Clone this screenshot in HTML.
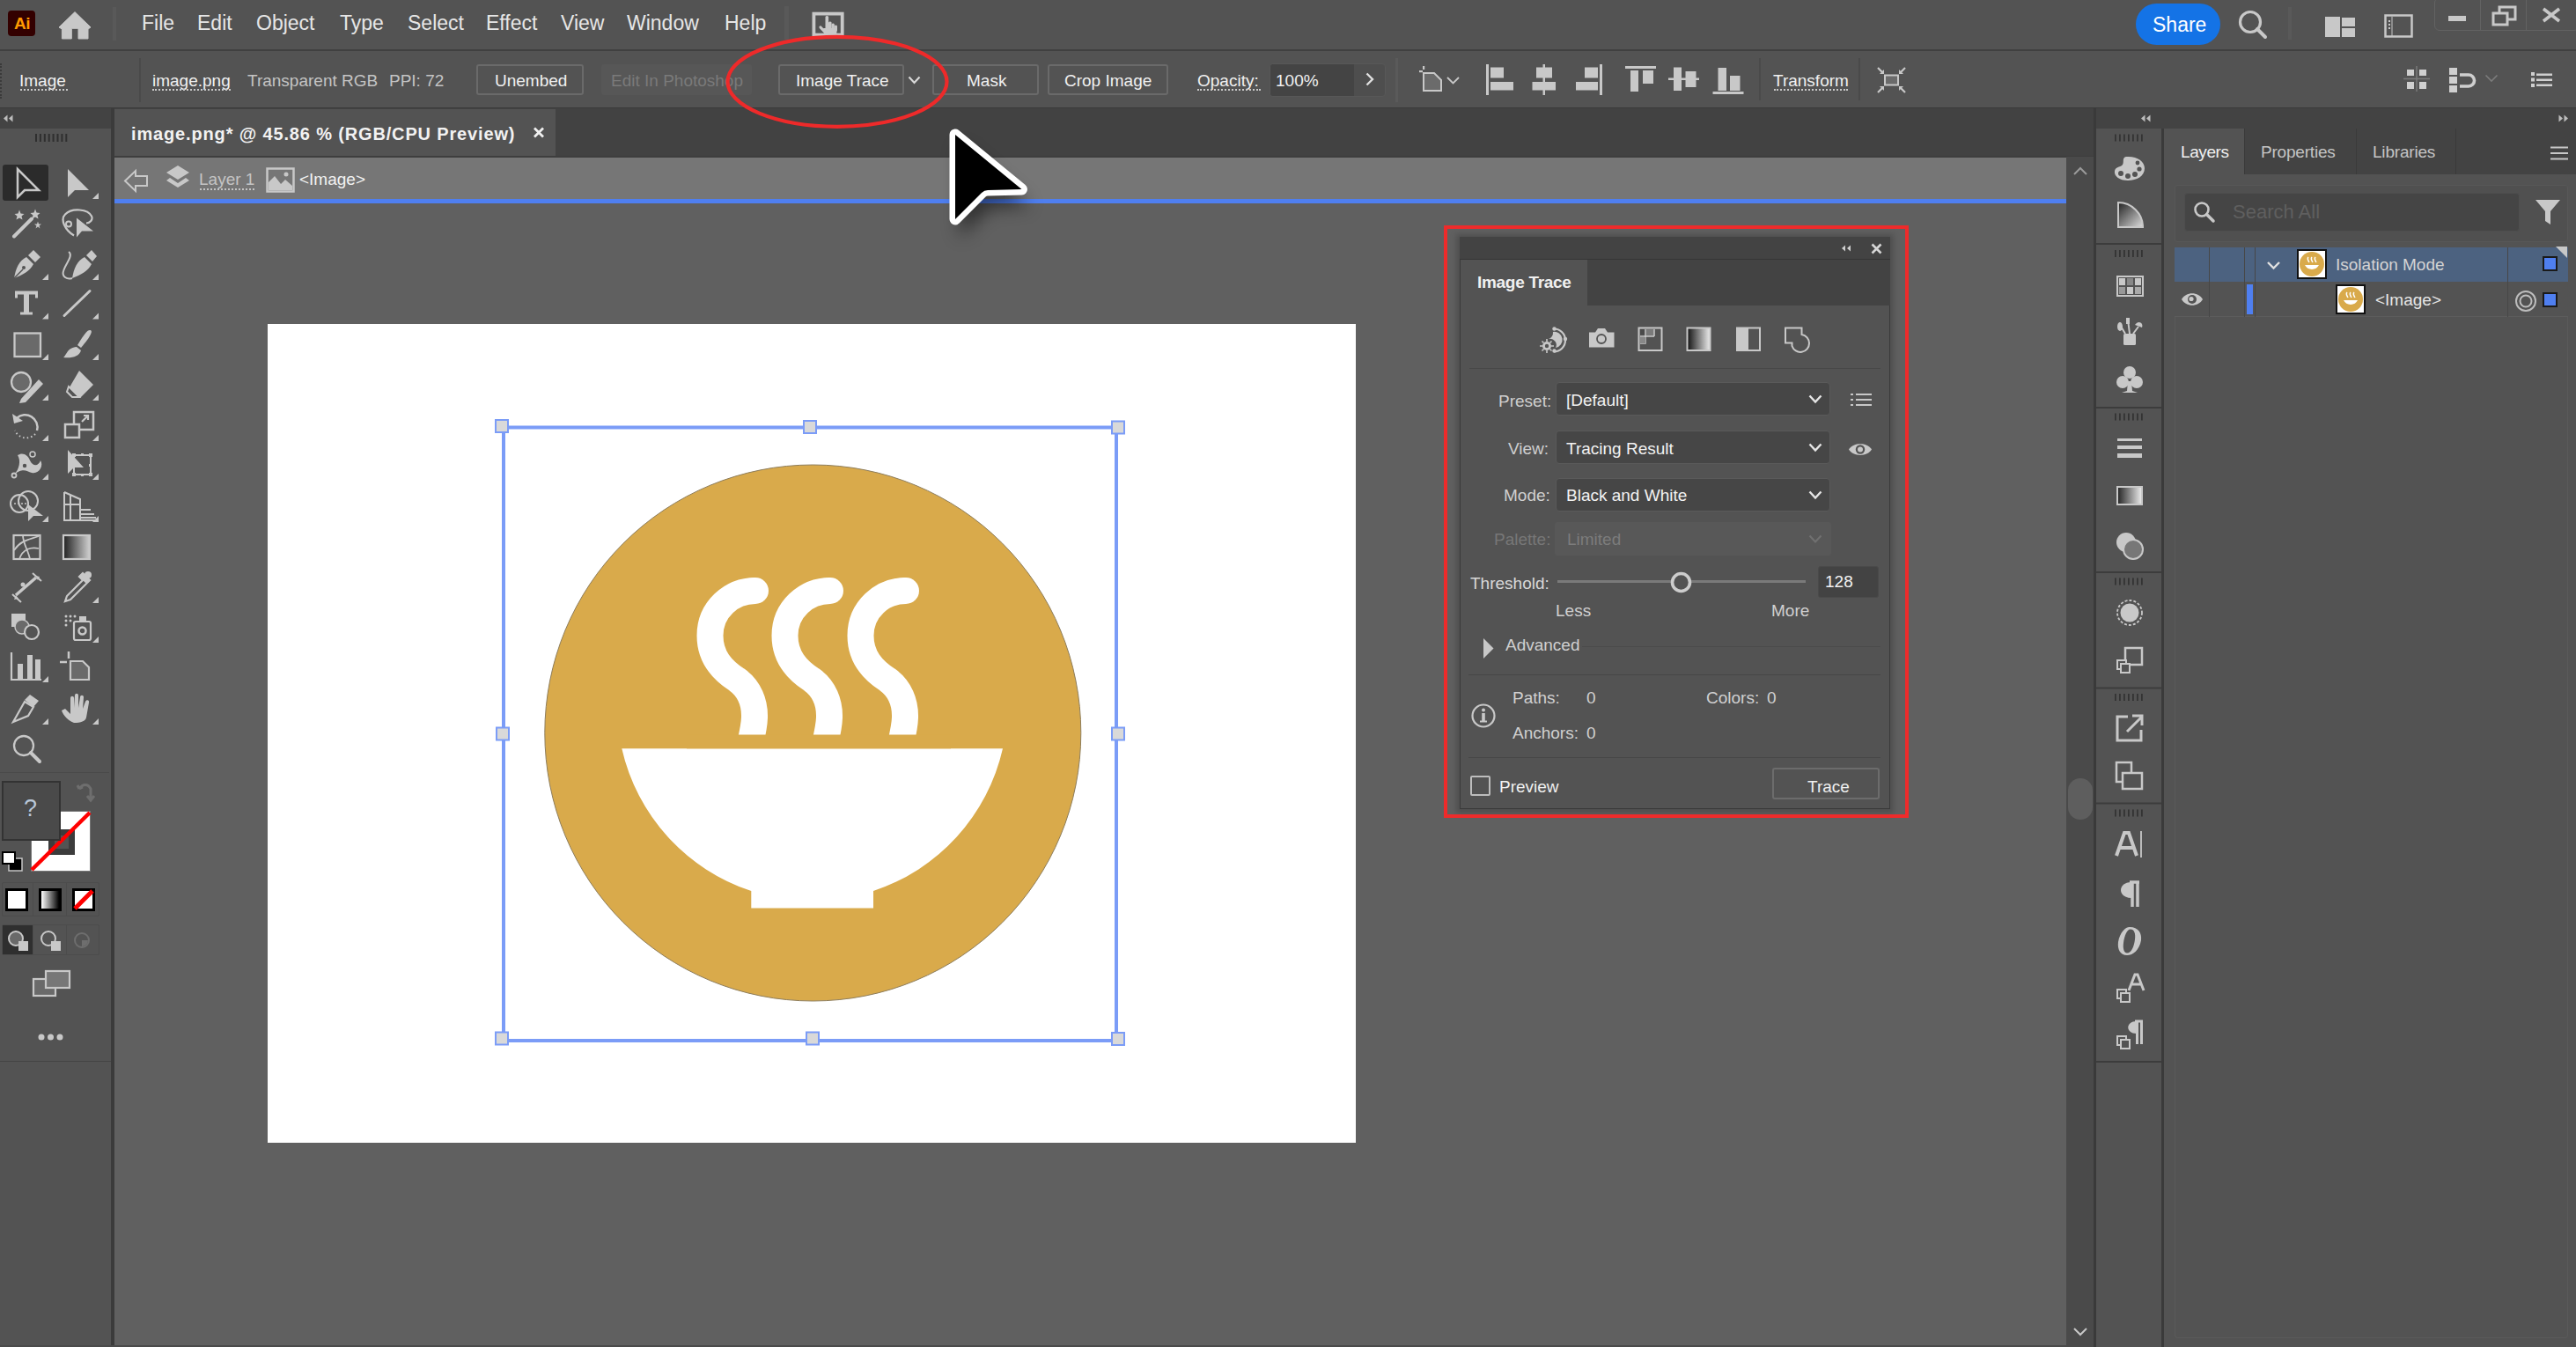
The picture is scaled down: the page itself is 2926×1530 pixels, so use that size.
<!DOCTYPE html>
<html><head><meta charset="utf-8">
<style>
*{margin:0;padding:0;box-sizing:border-box}
html,body{width:2926px;height:1530px;overflow:hidden;background:#535353;font-family:"Liberation Sans",sans-serif;color:#e0e0e0}
.a{position:absolute}
.t{position:absolute;white-space:nowrap;line-height:1}
svg{position:absolute;overflow:visible}
.dot{border-bottom:2px dotted #c8c8c8}
</style></head><body>

<!-- MENU BAR -->
<div class="a" style="left:0;top:0;width:2926px;height:56px;background:#535353"></div>
<div class="a" style="left:0;top:56px;width:2926px;height:2px;background:#404040"></div>
<!-- CONTROL BAR -->
<div class="a" style="left:0;top:58px;width:2926px;height:63px;background:#535353"></div>
<div class="a" style="left:0;top:122px;width:2926px;height:2px;background:#3a3a3a"></div>


<!-- MENU CONTENT -->
<div class="a" style="left:9px;top:12px;width:31px;height:29px;background:#330000;border-radius:4px"></div>
<div class="t" style="left:16px;top:17px;font-size:19px;font-weight:bold;color:#ff9a00;letter-spacing:-0.5px">Ai</div>
<svg style="left:66px;top:12px" width="40" height="34" viewBox="66 12 40 34"><path d="M85 13.6 L103 31 L100 33 L100 44 L89 44 L89 32.3 L81.3 32.3 L81.3 44 L70.4 44 L70.4 33 L67 31 Z" fill="#c8c8c8" stroke="#c8c8c8" stroke-width="1" stroke-linejoin="round"/></svg>
<div class="a" style="left:128px;top:8px;width:4px;height:38px;background:#595959"></div>
<div class="t" style="left:161px;top:15px;font-size:23px;color:#e6e6e6">File</div>
<div class="t" style="left:224px;top:15px;font-size:23px;color:#e6e6e6">Edit</div>
<div class="t" style="left:291px;top:15px;font-size:23px;color:#e6e6e6">Object</div>
<div class="t" style="left:386px;top:15px;font-size:23px;color:#e6e6e6">Type</div>
<div class="t" style="left:463px;top:15px;font-size:23px;color:#e6e6e6">Select</div>
<div class="t" style="left:552px;top:15px;font-size:23px;color:#e6e6e6">Effect</div>
<div class="t" style="left:637px;top:15px;font-size:23px;color:#e6e6e6">View</div>
<div class="t" style="left:712px;top:15px;font-size:23px;color:#e6e6e6">Window</div>
<div class="t" style="left:823px;top:15px;font-size:23px;color:#e6e6e6">Help</div>
<div class="a" style="left:891px;top:7px;width:5px;height:38px;background:#595959"></div>
<svg style="left:922px;top:13px" width="38" height="28" viewBox="922 13 38 28"><rect x="924.4" y="15.6" width="32.3" height="24" fill="none" stroke="#c8c8c8" stroke-width="3.8"/><g fill="#c8c8c8"><rect x="937.5" y="18" width="3.6" height="16" rx="1.5"/><rect x="941" y="24.5" width="3.6" height="10" rx="1.5"/><rect x="944.5" y="26.5" width="3.4" height="8" rx="1.5"/><rect x="947.8" y="28.5" width="3.2" height="7" rx="1.5"/><path d="M935 32 H951 L950 40 H937.5Z"/></g><path d="M932 31 L937.5 37" stroke="#c8c8c8" stroke-width="3.2" stroke-linecap="round"/></svg>

<div class="a" style="left:2426px;top:4px;width:96px;height:47px;background:#1473e6;border-radius:24px"></div>
<div class="t" style="left:2445px;top:17px;font-size:23px;color:#ffffff">Share</div>
<svg style="left:2541px;top:11px" width="36" height="34" viewBox="0 0 36 34"><circle cx="15" cy="14" r="11.5" fill="none" stroke="#c8c8c8" stroke-width="3.2"/><path d="M23 22 L32 31" stroke="#c8c8c8" stroke-width="4" stroke-linecap="round"/></svg>
<div class="a" style="left:2599px;top:8px;width:4px;height:37px;background:#595959"></div>
<svg style="left:2641px;top:19px" width="35" height="23" viewBox="0 0 35 23"><rect x="0" y="0" width="17" height="23" fill="#c8c8c8"/><rect x="19" y="1" width="15" height="10" fill="#c8c8c8"/><rect x="19" y="13" width="15" height="10" fill="#c8c8c8"/></svg>
<svg style="left:2708px;top:16px" width="33" height="27" viewBox="0 0 33 27"><rect x="1.5" y="1.5" width="30" height="24" fill="none" stroke="#c8c8c8" stroke-width="2.5"/><path d="M6 7 v2 M6 11 v2 M6 15 v2" stroke="#c8c8c8" stroke-width="2"/><path d="M9 3 v22" stroke="#c8c8c8" stroke-width="1"/></svg>
<div class="a" style="left:2765px;top:-3px;width:165px;height:38px;border:1px solid #626262;border-radius:6px"></div>
<div class="a" style="left:2817px;top:0;width:1px;height:34px;background:#626262"></div>
<div class="a" style="left:2869px;top:0;width:1px;height:34px;background:#626262"></div>
<div class="a" style="left:2781px;top:18px;width:20px;height:6px;background:#c8c8c8"></div>
<svg style="left:2830px;top:6px" width="30" height="24" viewBox="0 0 30 24"><rect x="9" y="2" width="18" height="14" fill="none" stroke="#c8c8c8" stroke-width="3"/><rect x="2" y="9" width="16" height="13" fill="#535353" stroke="#c8c8c8" stroke-width="3"/></svg>
<svg style="left:2887px;top:9px" width="22" height="16" viewBox="0 0 22 16"><path d="M2 1 L20 15 M20 1 L2 15" stroke="#c8c8c8" stroke-width="3.5"/></svg>

<!-- CONTROL BAR CONTENT -->
<div class="a" style="left:0px;top:72px;width:2px;height:40px;border-left:2px dotted #3a3a3a"></div>
<div class="t" style="left:22px;top:82px;font-size:19px;color:#f0f0f0">Image</div>
<div class="a" style="left:23px;top:101px;width:54px;height:2px;border-top:2px dotted #c8c8c8"></div>
<div class="a" style="left:158px;top:66px;width:2px;height:50px;background:#4a4a4a"></div>
<div class="t" style="left:173px;top:82px;font-size:19px;color:#f0f0f0">image.png</div>
<div class="a" style="left:173px;top:101px;width:89px;height:2px;border-top:2px dotted #c8c8c8"></div>
<div class="t" style="left:281px;top:82px;font-size:19px;color:#c4c4c4">Transparent RGB</div>
<div class="t" style="left:442px;top:82px;font-size:19px;color:#c4c4c4">PPI: 72</div>
<div class="a" style="left:541px;top:73px;width:122px;height:35px;border:2px solid #6a6a6a;border-radius:3px"></div>
<div class="t" style="left:562px;top:82px;font-size:19px;color:#f0f0f0">Unembed</div>
<div class="a" style="left:683px;top:73px;width:171px;height:35px;background:#575757;border-radius:3px"></div>
<div class="t" style="left:694px;top:82px;font-size:19px;color:#7a7a7a">Edit In Photoshop</div>
<div class="a" style="left:884px;top:73px;width:143px;height:35px;border:2px solid #6a6a6a;border-radius:3px"></div>
<div class="t" style="left:904px;top:82px;font-size:19px;color:#f0f0f0">Image Trace</div>
<svg style="left:1031px;top:86px" width="15" height="10" viewBox="0 0 15 10"><path d="M1.5 1.5 L7.5 8 L13.5 1.5" fill="none" stroke="#d8d8d8" stroke-width="2.2"/></svg>
<div class="a" style="left:1059px;top:73px;width:121px;height:35px;border:2px solid #6a6a6a;border-radius:3px"></div>
<div class="t" style="left:1098px;top:82px;font-size:19px;color:#f0f0f0">Mask</div>
<div class="a" style="left:1190px;top:73px;width:137px;height:35px;border:2px solid #6a6a6a;border-radius:3px"></div>
<div class="t" style="left:1209px;top:82px;font-size:19px;color:#f0f0f0">Crop Image</div>
<div class="t" style="left:1360px;top:82px;font-size:19px;color:#f0f0f0">Opacity:</div>
<div class="a" style="left:1360px;top:101px;width:72px;height:2px;border-top:2px dotted #c8c8c8"></div>
<div class="a" style="left:1442px;top:72px;width:132px;height:38px;background:#4e4e4e;border:1px solid #585858;border-radius:4px"></div>
<div class="a" style="left:1443px;top:73px;width:95px;height:36px;background:#444444;border-radius:3px 0 0 3px"></div>
<div class="t" style="left:1449px;top:82px;font-size:19px;color:#f0f0f0">100%</div>
<svg style="left:1551px;top:82px" width="10" height="16" viewBox="0 0 10 16"><path d="M1.5 1.5 L8 8 L1.5 14.5" fill="none" stroke="#e0e0e0" stroke-width="2.4"/></svg>
<div class="a" style="left:1585px;top:66px;width:3px;height:50px;background:#5a5a5a"></div>

<svg style="left:1600px;top:70px" width="400" height="42" viewBox="1600 70 400 42">
 <g fill="#c8c8c8">
  <path d="M1617 83 h12 l8 8 v12 h-20z" fill="#6b6b6b" stroke="#c8c8c8" stroke-width="2"/>
  <rect x="1612" y="80" width="4" height="2.2"/><rect x="1616" y="75" width="2.2" height="4"/>
  <rect x="1688" y="73" width="3" height="35"/><rect x="1693" y="76.5" width="15" height="12"/><rect x="1693" y="93" width="26" height="9.5"/>
  <rect x="1752.5" y="73" width="2.5" height="35"/><rect x="1745" y="76.5" width="18" height="12"/><rect x="1740.5" y="93" width="26.5" height="9.5"/>
  <rect x="1817" y="73" width="3" height="35"/><rect x="1800" y="76.5" width="15" height="12"/><rect x="1790" y="93" width="25" height="9.5"/>
  <rect x="1846" y="75" width="35" height="3"/><rect x="1852" y="80" width="9" height="24"/><rect x="1866" y="80" width="12" height="15"/>
  <rect x="1895" y="88.5" width="35" height="2.5"/><rect x="1901" y="76.5" width="9" height="26.5"/><rect x="1914.5" y="81" width="12" height="18"/>
  <rect x="1945.5" y="104" width="35" height="3"/><rect x="1951.5" y="77" width="9.5" height="26"/><rect x="1965" y="86" width="11.5" height="17"/>
 </g>
 <path d="M1644 88 l6.5 6.5 l6.5 -6.5" fill="none" stroke="#c8c8c8" stroke-width="1.8"/>
</svg>
<div class="a" style="left:1998px;top:66px;width:2px;height:48px;background:#4a4a4a"></div>
<div class="t" style="left:2014px;top:82px;font-size:19px;color:#f0f0f0">Transform</div>
<div class="a" style="left:2015px;top:101px;width:84px;height:2px;border-top:2px dotted #c8c8c8"></div>
<div class="a" style="left:2111px;top:66px;width:2px;height:48px;background:#4a4a4a"></div>
<svg style="left:2132px;top:76px" width="33" height="30" viewBox="0 0 33 30">
 <rect x="9" y="9.5" width="15" height="11" fill="#6b6b6b" stroke="#c8c8c8" stroke-width="2"/>
 <g stroke="#c8c8c8" stroke-width="2.2" fill="none"><path d="M1 1 L7 7 M1 29 L7 23 M32 1 L26 7 M32 29 L26 23"/></g>
 <g fill="#c8c8c8"><path d="M8 3 v5 h-5z"/><path d="M8 27 v-5 h-5z"/><path d="M25 3 v5 h5z"/><path d="M25 27 v-5 h5z"/></g>
</svg>

<svg style="left:2728px;top:74px" width="34" height="32" viewBox="0 0 34 32">
 <g fill="#cfcfcf"><rect x="6" y="5" width="8" height="7"/><rect x="20" y="5" width="8" height="7"/><rect x="6" y="19" width="8" height="8"/><rect x="20" y="19" width="8" height="8"/></g>
 <path d="M2 15.5 h30 M17 1 v29" stroke="#7a7a7a" stroke-width="1.5"/>
</svg>
<svg style="left:2781px;top:76px" width="32" height="30" viewBox="0 0 32 30">
 <g fill="#cfcfcf"><rect x="1" y="1" width="9" height="8"/><rect x="1" y="11" width="9" height="8"/><rect x="1" y="21" width="9" height="8"/></g>
 <path d="M13 9 h10 a6.5 6.5 0 0 1 0 13 h-10" fill="none" stroke="#cfcfcf" stroke-width="3.6"/>
</svg>
<svg style="left:2822px;top:84px" width="16" height="10" viewBox="0 0 16 10"><path d="M1.5 1.5 L8 8 L14.5 1.5" fill="none" stroke="#7c7c7c" stroke-width="1.6"/></svg>
<svg style="left:2875px;top:82px" width="24" height="17" viewBox="0 0 24 17"><g fill="#cfcfcf"><rect x="0" y="0" width="4" height="4"/><rect x="0" y="6.5" width="4" height="4"/><rect x="0" y="13" width="4" height="4"/><rect x="6" y="1.5" width="18" height="2.5"/><rect x="6" y="7.5" width="18" height="2.5"/><rect x="6" y="13.5" width="18" height="2.5"/></g></svg>

<!-- LEFT TOOLBAR -->
<div class="a" style="left:0;top:123px;width:126px;height:23px;background:#434343"></div>
<div class="a" style="left:0;top:146px;width:126px;height:1384px;background:#535353"></div>
<div class="a" style="left:126px;top:123px;width:4px;height:1407px;background:#3b3b3b"></div>


<!-- TOOLBAR CONTENT -->
<svg style="left:3px;top:130px" width="13" height="9" viewBox="0 0 13 9"><path d="M5.5 0.5 L1 4.5 L5.5 8.5z M11.5 0.5 L7 4.5 L11.5 8.5z" fill="#bdbdbd"/></svg>
<svg style="left:0;top:146px" width="126" height="1100" viewBox="0 146 126 1100"><rect x="3" y="187" width="52" height="41" rx="3" fill="#2b2b2b"/><g fill="#2f2f2f"><rect x="40.0" y="152" width="2" height="9"/><rect x="44.9" y="152" width="2" height="9"/><rect x="49.8" y="152" width="2" height="9"/><rect x="54.7" y="152" width="2" height="9"/><rect x="59.6" y="152" width="2" height="9"/><rect x="64.5" y="152" width="2" height="9"/><rect x="69.4" y="152" width="2" height="9"/><rect x="74.3" y="152" width="2" height="9"/></g><g transform="translate(30 208)"><path d="M-10 -16 L-10 16 L-2 8 L14 8 Z" fill="none" stroke="#c8c8c8" stroke-width="2.5" stroke-linejoin="miter"/></g><g transform="translate(88 208)"><path d="M-11 -16 L-11 16 L-3 8 L13 8 Z" fill="#c8c8c8"/></g><path d="M105 226 L112 219 L112 226Z" fill="#c8c8c8"/><g transform="translate(30 253.5)"><path d="M-14 15 L6 -5" stroke="#c8c8c8" stroke-width="4" stroke-linecap="round"/><path d="M-8 -15 l1.5 4 l4 0.5 l-3 2.5 l1 4 l-3.5 -2 l-3.5 2 l1 -4 l-3 -2.5 l4 -0.5z M10 -16 l1.5 4 l4 0.5 l-3 2.5 l1 4 l-3.5 -2 l-3.5 2 l1 -4 l-3 -2.5 l4 -0.5z" fill="#c8c8c8"/><path d="M13 -2 l1 3 l3 0 l-2.5 2 l1 3 l-2.5 -2 l-2.5 2 l1 -3 l-2.5 -2 l3 0z" fill="#c8c8c8"/></g><g transform="translate(88 253.5)"><path d="M-4 14 C-14 8 -20 -4 -14 -10 C-6 -18 12 -16 16 -8 C18 -4 14 0 10 0" fill="none" stroke="#c8c8c8" stroke-width="2.2"/><circle cx="-10" cy="1" r="3" fill="none" stroke="#c8c8c8" stroke-width="2"/><path d="M-1 -6 L-1 16 L5 9 L18 9 Z" fill="#c8c8c8"/></g><g transform="translate(30 300)"><path d="M-14 16 C-12 4 -8 -4 0 -8 L8 0 C4 8 -4 12 -14 16 Z" fill="#c8c8c8"/><path d="M2 -10 L8 -16 L16 -8 L10 -2 Z" fill="#c8c8c8"/><path d="M-14 16 L-4 6" stroke="#535353" stroke-width="1.5"/><circle cx="-3" cy="4" r="2" fill="#535353"/></g><path d="M48 318 L55 311 L55 318Z" fill="#c8c8c8"/><g transform="translate(88 300)"><path d="M-6 16 C-4 4 0 -4 8 -8 L16 0 C12 8 4 12 -6 16 Z" fill="#c8c8c8"/><path d="M10 -10 L16 -16 L22 -9 L17 -3 Z" fill="#c8c8c8"/><path d="M-10 -14 C-4 -10 -14 0 -16 8 C-18 14 -12 18 -6 16" fill="none" stroke="#c8c8c8" stroke-width="2"/></g><path d="M105 318 L112 311 L112 318Z" fill="#c8c8c8"/><g transform="translate(30 344.5)"><path d="M-13 -14 h26 v8 h-3 v-4 h-7 v20 h4 v3 h-14 v-3 h4 v-20 h-7 v4 h-3z" fill="#c8c8c8"/></g><path d="M48 362.5 L55 355.5 L55 362.5Z" fill="#c8c8c8"/><g transform="translate(88 344.5)"><path d="M-15 14 L14 -14" stroke="#c8c8c8" stroke-width="3" stroke-linecap="round"/></g><path d="M105 362.5 L112 355.5 L112 362.5Z" fill="#c8c8c8"/><g transform="translate(30 391)"><rect x="-13.5" y="-12.5" width="29.5" height="26.5" fill="#6a6a6a" stroke="#c8c8c8" stroke-width="2.3"/></g><path d="M48 409 L55 402 L55 409Z" fill="#c8c8c8"/><g transform="translate(88 391)"><path d="M14 -16 C18 -16 16 -10 4 4 L0 1 C8 -12 11 -16 14 -16Z" fill="#c8c8c8"/><path d="M-1 3 L4 7 C2 14 -6 16 -16 15 C-12 12 -12 4 -1 3Z" fill="#c8c8c8"/></g><path d="M105 409 L112 402 L112 409Z" fill="#c8c8c8"/><g transform="translate(30 437)"><circle cx="-6" cy="-3" r="11" fill="#6a6a6a" stroke="#c8c8c8" stroke-width="2.3"/><path d="M-6 16 L14 -6 L19 -1 L-1 20 L-8 21z" fill="#c8c8c8"/></g><path d="M48 455 L55 448 L55 455Z" fill="#c8c8c8"/><g transform="translate(88 437)"><path d="M2 -16 L18 0 L4 14 L-6 14 L-12 8 Z" fill="#c8c8c8"/><path d="M-12 8 L-6 14 L2 14 L-4 8 L-10 2 Z" fill="#535353" stroke="#c8c8c8" stroke-width="2"/></g><path d="M105 455 L112 448 L112 455Z" fill="#c8c8c8"/><g transform="translate(30 483)"><path d="M-11 -8 A14 14 0 0 1 12 6" fill="none" stroke="#c8c8c8" stroke-width="2.5"/><path d="M-16 -13 L-14 -2 L-4 -5z" fill="#c8c8c8"/><path d="M10 10 A14 14 0 0 1 -13 6" fill="none" stroke="#c8c8c8" stroke-width="2" stroke-dasharray="1.5 3"/></g><path d="M48 501 L55 494 L55 501Z" fill="#c8c8c8"/><g transform="translate(88 483)"><rect x="-4" y="-15" width="22" height="20" fill="none" stroke="#c8c8c8" stroke-width="2.5"/><rect x="-14" y="-1" width="16" height="15" fill="#535353" stroke="#c8c8c8" stroke-width="2.5"/><path d="M5 -4 L12 -11 M7 -11 h5 v5" stroke="#c8c8c8" stroke-width="2.2" fill="none"/></g><path d="M105 501 L112 494 L112 501Z" fill="#c8c8c8"/><g transform="translate(30 527)"><path d="M-14 12 C-8 6 -6 -4 -10 -10 C-4 -14 2 -10 4 -4 C8 4 14 2 16 -4 C20 2 14 12 6 10 C0 8 -4 4 -14 12Z" fill="#c8c8c8"/><circle cx="-14" cy="13" r="2.5" fill="none" stroke="#c8c8c8" stroke-width="1.8"/><circle cx="-2" cy="2" r="3" fill="#535353" stroke="#c8c8c8" stroke-width="1.5"/><circle cx="7" cy="-11" r="3" fill="none" stroke="#c8c8c8" stroke-width="1.5"/></g><path d="M48 545 L55 538 L55 545Z" fill="#c8c8c8"/><g transform="translate(88 527)"><path d="M-11 -16 L-11 11 L-4 4 L7 4 Z" fill="#c8c8c8"/><rect x="-4" y="-10" width="19" height="22" fill="none" stroke="#c8c8c8" stroke-width="2"/><g fill="#c8c8c8"><rect x="-6" y="-12" width="4" height="4"/><rect x="13" y="-12" width="4" height="4"/><rect x="-6" y="10" width="4" height="4"/><rect x="13" y="10" width="4" height="4"/><rect x="4" y="-12" width="3" height="3"/><rect x="4" y="11" width="3" height="3"/><rect x="13" y="0" width="3" height="3"/></g></g><path d="M105 545 L112 538 L112 545Z" fill="#c8c8c8"/><g transform="translate(30 575)"><circle cx="-8" cy="-3" r="10" fill="none" stroke="#c8c8c8" stroke-width="2"/><circle cx="2" cy="-6" r="11" fill="none" stroke="#c8c8c8" stroke-width="2"/><path d="M-14 -3 h16" stroke="#c8c8c8" stroke-width="1.5" stroke-dasharray="2 2"/><path d="M2 -2 L2 17 L8 11 L19 11Z" fill="#c8c8c8"/></g><path d="M48 593 L55 586 L55 593Z" fill="#c8c8c8"/><g transform="translate(88 575)"><path d="M-15 -16 L-15 16 L20 16 M-15 -16 L3 -8 L3 16 M-15 -16 L-15 16 M-15 -2 L3 -2 M-8 -13 L-8 16" fill="none" stroke="#c8c8c8" stroke-width="2"/><path d="M3 4 h12 M3 9 h16 M3 13 h18" stroke="#c8c8c8" stroke-width="2"/></g><path d="M105 593 L112 586 L112 593Z" fill="#c8c8c8"/><g transform="translate(30 621)"><rect x="-14.5" y="-13" width="30" height="27" fill="none" stroke="#c8c8c8" stroke-width="2.2"/><path d="M-14 4 C-6 -8 4 -8 14 -12 M-8 14 C-4 2 6 0 14 2 M-4 -13 C-4 -4 2 4 4 14" fill="none" stroke="#c8c8c8" stroke-width="1.8"/></g><g transform="translate(88 621)"><defs><linearGradient id="tg" x1="0" x2="1"><stop offset="0" stop-color="#202020"/><stop offset="1" stop-color="#d0d0d0"/></linearGradient></defs><rect x="-16" y="-13" width="30" height="27" fill="url(#tg)" stroke="#c8c8c8" stroke-width="2.2"/></g><g transform="translate(30 667)"><path d="M-12 9 L11 -11" stroke="#c8c8c8" stroke-width="3.5"/><path d="M-16 8 L-6 17 M7 -16 L17 -7" stroke="#c8c8c8" stroke-width="2"/><path d="M-9 13 L-14 14 L-12 9z M10 -13 L15 -12 L13 -8z" fill="#c8c8c8"/><circle cx="-4" cy="-3" r="2.5" fill="#c8c8c8"/></g><g transform="translate(88 667)"><path d="M6 -16 L14 -8 L10 -4 L-8 14 L-14 16 L-12 10 L6 -8 L2 -12z" fill="#535353" stroke="#c8c8c8" stroke-width="2.2"/><path d="M6 -16 L14 -8 L10 -4 L2 -12z" fill="#c8c8c8"/><circle cx="12" cy="-14" r="4" fill="#c8c8c8"/></g><path d="M105 685 L112 678 L112 685Z" fill="#c8c8c8"/><g transform="translate(30 712)"><rect x="-17" y="-15" width="16" height="15" fill="#c8c8c8"/><circle cx="-5" cy="0" r="8" fill="#6a6a6a" stroke="#c8c8c8" stroke-width="1.5"/><circle cx="6" cy="6" r="8" fill="#535353" stroke="#c8c8c8" stroke-width="2.2"/></g><g transform="translate(88 712)"><g fill="#c8c8c8"><circle cx="-13" cy="-12" r="1.5"/><circle cx="-8" cy="-12" r="1.5"/><circle cx="-3" cy="-12" r="1.5"/><circle cx="-13" cy="-7" r="1.5"/><circle cx="-8" cy="-7" r="1.5"/><circle cx="-13" cy="-2" r="1.5"/></g><rect x="-4" y="-6" width="19" height="21" rx="2" fill="#535353" stroke="#c8c8c8" stroke-width="2.2"/><rect x="2" y="-12" width="8" height="6" fill="#c8c8c8"/><circle cx="5.5" cy="4.5" r="4" fill="none" stroke="#c8c8c8" stroke-width="2.5"/></g><path d="M105 730 L112 723 L112 730Z" fill="#c8c8c8"/><g transform="translate(30 757)"><path d="M-17 -16 V15 H17" fill="none" stroke="#c8c8c8" stroke-width="2.2"/><rect x="-10" y="-3" width="6" height="17" fill="#c8c8c8"/><rect x="1" y="-13" width="6" height="27" fill="#c8c8c8"/><rect x="10" y="-8" width="6" height="22" fill="#c8c8c8"/></g><path d="M48 775 L55 768 L55 775Z" fill="#c8c8c8"/><g transform="translate(88 757)"><path d="M-8 -6 h14 l7 7 v14 h-21z" fill="#6a6a6a" stroke="#c8c8c8" stroke-width="2.2"/><path d="M-20 -5 h8 M-10 -17 v8" stroke="#c8c8c8" stroke-width="2.5"/></g><g transform="translate(30 805)"><path d="M-15 15 L2 8 L8 -2 L-2 -8 Z" fill="none" stroke="#c8c8c8" stroke-width="2.2"/><path d="M-2 -10 L4 -16 L14 -9 L8 -2 Z" fill="#c8c8c8"/></g><path d="M48 823 L55 816 L55 823Z" fill="#c8c8c8"/><g transform="translate(88 805)"><path d="M-4 16 C-10 14 -16 8 -18 2 L-14 0 L-8 6 L-8 -12 C-8 -15 -4 -15 -4 -12 L-4 -1 L-3 -15 C-3 -18 1 -18 1 -15 L1 -1 L3 -13 C3 -16 7 -16 7 -13 L6 0 L9 -8 C10 -11 14 -10 13 -7 L10 10 C9 14 4 16 -4 16Z" fill="#c8c8c8"/></g><path d="M105 823 L112 816 L112 823Z" fill="#c8c8c8"/><g transform="translate(30 851)"><circle cx="-3" cy="-4" r="11" fill="none" stroke="#c8c8c8" stroke-width="2.3"/><path d="M5 4 L15 14" stroke="#c8c8c8" stroke-width="4" stroke-linecap="round"/></g></svg>
<div class="a" style="left:0;top:877px;width:124px;height:1px;background:#4a4a4a"></div>
<!-- fill/stroke -->
<div class="a" style="left:35px;top:921px;width:68px;height:69px;background:#fff;border:1px solid #777"></div>
<div class="a" style="left:55px;top:942px;width:30px;height:29px;border:7px solid #3c3c3c;background:#535353"></div>
<svg style="left:35px;top:921px" width="68" height="69" viewBox="0 0 68 69"><path d="M1 67 L67 2" stroke="#ff0000" stroke-width="4.5"/></svg>
<div class="a" style="left:2px;top:887px;width:67px;height:68px;background:#4a4a4a;border:2px solid #333"></div>
<div class="t" style="left:27px;top:905px;font-size:27px;color:#b9c7d8">?</div>
<svg style="left:86px;top:888px" width="23" height="24" viewBox="0 0 23 24"><path d="M4 8 C8 2 14 2 17 8 L17 20 M13 16 L17 21 L21 16 M4 8 L2 4 M4 8 L8 6" fill="none" stroke="#6e6e6e" stroke-width="3"/></svg>
<svg style="left:1px;top:966px" width="26" height="25" viewBox="0 0 26 25"><rect x="9" y="9" width="15" height="14" fill="#000" stroke="#c8c8c8" stroke-width="1.5"/><rect x="2" y="2" width="14" height="13" fill="#fff" stroke="#000" stroke-width="2"/></svg>
<!-- color mode -->
<div class="a" style="left:2px;top:1002px;width:111px;height:39px;border:1px solid #4c4c4c;border-radius:2px"></div>
<div class="a" style="left:37px;top:1003px;width:1px;height:37px;background:#4c4c4c"></div>
<div class="a" style="left:75px;top:1003px;width:1px;height:37px;background:#4c4c4c"></div>
<div class="a" style="left:6px;top:1009px;width:26px;height:26px;background:#fff;border:3px solid #000"></div>
<div class="a" style="left:44px;top:1009px;width:26px;height:26px;background:linear-gradient(90deg,#fff,#000);border:3px solid #000"></div>
<div class="a" style="left:82px;top:1009px;width:26px;height:26px;background:#fff;border:3px solid #000;overflow:hidden"></div>
<svg style="left:85px;top:1012px" width="20" height="20" viewBox="0 0 20 20"><path d="M0 20 L20 0" stroke="#ff0000" stroke-width="5"/></svg>
<!-- draw modes -->
<div class="a" style="left:2px;top:1050px;width:111px;height:35px;border:1px solid #4c4c4c;border-radius:2px"></div>
<div class="a" style="left:3px;top:1051px;width:34px;height:33px;background:#2f2f2f"></div>
<div class="a" style="left:75px;top:1051px;width:1px;height:33px;background:#4c4c4c"></div>
<div class="a" style="left:37px;top:1051px;width:1px;height:33px;background:#4c4c4c"></div>
<svg style="left:8px;top:1056px" width="110" height="26" viewBox="0 0 110 26">
 <circle cx="10" cy="10" r="8" fill="#6a6a6a" stroke="#c8c8c8" stroke-width="2"/><rect x="13" y="13" width="11" height="11" fill="#c8c8c8"/>
 <circle cx="47" cy="10" r="8" fill="#535353" stroke="#c8c8c8" stroke-width="2"/><rect x="50" y="13" width="11" height="11" fill="#c8c8c8"/>
 <circle cx="85" cy="12" r="8" fill="none" stroke="#6e6e6e" stroke-width="2"/><path d="M85 12 h7 a7 7 0 0 1 -7 7z" fill="#6e6e6e"/>
</svg>
<svg style="left:36px;top:1101px" width="45" height="32" viewBox="0 0 45 32"><rect x="2" y="11" width="25" height="19" fill="#6a6a6a" stroke="#c8c8c8" stroke-width="2.2"/><rect x="16" y="2" width="27" height="19" fill="#777" stroke="#c8c8c8" stroke-width="2.2"/></svg>
<svg style="left:43px;top:1172px" width="30" height="12" viewBox="0 0 30 12"><circle cx="4" cy="6" r="3.5" fill="#c8c8c8"/><circle cx="14.5" cy="6" r="3.5" fill="#c8c8c8"/><circle cx="25" cy="6" r="3.5" fill="#c8c8c8"/></svg>
<div class="a" style="left:0;top:1205px;width:126px;height:1px;background:#444"></div>

<!-- TAB BAR -->
<div class="a" style="left:130px;top:123px;width:2248px;height:55px;background:#424242"></div>
<div class="a" style="left:130px;top:124px;width:501px;height:54px;background:#535353"></div>

<!-- BREADCRUMB -->
<div class="a" style="left:130px;top:178px;width:2217px;height:48px;background:#767676"></div>
<div class="a" style="left:130px;top:177px;width:2248px;height:2px;background:#3e3e3e"></div>
<div class="a" style="left:130px;top:226px;width:2217px;height:5px;background:#4f7ff0"></div>

<!-- CANVAS -->
<div class="a" style="left:130px;top:231px;width:2217px;height:1299px;background:#606060"></div>


<!-- TAB CONTENT -->
<div class="t" style="left:149px;top:142px;font-size:20px;font-weight:bold;letter-spacing:0.85px;color:#f2f2f2">image.png* @ 45.86 % (RGB/CPU Preview)</div>
<svg style="left:605px;top:144px" width="14" height="13" viewBox="0 0 14 13"><path d="M2 1.5 L12 11.5 M12 1.5 L2 11.5" stroke="#f0f0f0" stroke-width="2.8"/></svg>
<svg style="left:140px;top:192px" width="29" height="27" viewBox="0 0 29 27"><path d="M2 13.5 L14 2 V8 H27 V19 H14 V25 Z" fill="none" stroke="#c8c8c8" stroke-width="2"/></svg>
<svg style="left:188px;top:187px" width="28" height="32" viewBox="0 0 28 32"><path d="M14 1 L27 9 L14 17 L1 9Z" fill="#c8c8c8"/><path d="M5 15 L14 21 L23 15 L27 18 L14 26 L1 18Z" fill="#c8c8c8"/></svg>
<div class="t" style="left:226px;top:194px;font-size:19px;color:#c4c4c4">Layer 1</div>
<div class="a" style="left:227px;top:214px;width:62px;height:2px;border-top:2px dotted #c4c4c4"></div>
<svg style="left:302px;top:190px" width="33" height="29" viewBox="0 0 33 29"><rect x="1.5" y="1.5" width="30" height="26" fill="none" stroke="#c8c8c8" stroke-width="2.5"/><path d="M3 26 L3 17 L10 10 L17 19 L22 14 L30 21 L30 26Z" fill="#c8c8c8"/><circle cx="23" cy="8" r="2.5" fill="#c8c8c8"/></svg>
<div class="t" style="left:340px;top:194px;font-size:19px;color:#f2f2f2">&lt;Image&gt;</div>

<!-- SCROLLBAR -->
<div class="a" style="left:2347px;top:178px;width:31px;height:1352px;background:#4a4a4a"></div>
<div class="a" style="left:2378px;top:123px;width:3px;height:1407px;background:#3a3a3a"></div>

<!-- RIGHT DOCK -->
<div class="a" style="left:2381px;top:123px;width:545px;height:23px;background:#434343"></div>
<div class="a" style="left:2381px;top:146px;width:74px;height:1384px;background:#535353"></div>
<div class="a" style="left:2455px;top:146px;width:3px;height:1384px;background:#3a3a3a"></div>

<!-- LAYERS PANEL -->
<div class="a" style="left:2458px;top:146px;width:468px;height:1384px;background:#535353"></div>


<!-- SCROLLBAR CONTENT -->
<svg style="left:2354px;top:189px" width="18" height="11" viewBox="0 0 18 11"><path d="M2 9 L9 2 L16 9" fill="none" stroke="#9a9a9a" stroke-width="2"/></svg>
<svg style="left:2354px;top:1507px" width="18" height="11" viewBox="0 0 18 11"><path d="M2 2 L9 9 L16 2" fill="none" stroke="#c8c8c8" stroke-width="2"/></svg>
<div class="a" style="left:2349px;top:884px;width:28px;height:47px;background:#5e5e5e;border-radius:14px"></div>
<!-- RIGHT HEADER -->
<svg style="left:2431px;top:130px" width="13" height="9" viewBox="0 0 13 9"><path d="M5.5 0.5 L1 4.5 L5.5 8.5z M11.5 0.5 L7 4.5 L11.5 8.5z" fill="#bdbdbd"/></svg>
<svg style="left:2905px;top:130px" width="13" height="9" viewBox="0 0 13 9"><path d="M1.5 0.5 L6 4.5 L1.5 8.5z M7.5 0.5 L12 4.5 L7.5 8.5z" fill="#bdbdbd"/></svg>
<svg style="left:2381px;top:146px" width="74" height="1100" viewBox="2381 146 74 1100"><rect x="2381" y="276" width="74" height="2" fill="#3c3c3c"/><rect x="2381" y="462" width="74" height="2" fill="#3c3c3c"/><rect x="2381" y="649" width="74" height="2" fill="#3c3c3c"/><rect x="2381" y="780.5" width="74" height="2" fill="#3c3c3c"/><rect x="2381" y="911.5" width="74" height="2" fill="#3c3c3c"/><rect x="2381" y="1205" width="74" height="2" fill="#3c3c3c"/><g fill="#333"><rect x="2402" y="152.5" width="1.8" height="8"/><rect x="2407" y="152.5" width="1.8" height="8"/><rect x="2412" y="152.5" width="1.8" height="8"/><rect x="2417" y="152.5" width="1.8" height="8"/><rect x="2422" y="152.5" width="1.8" height="8"/><rect x="2427" y="152.5" width="1.8" height="8"/><rect x="2432" y="152.5" width="1.8" height="8"/></g><g fill="#333"><rect x="2402" y="284" width="1.8" height="8"/><rect x="2407" y="284" width="1.8" height="8"/><rect x="2412" y="284" width="1.8" height="8"/><rect x="2417" y="284" width="1.8" height="8"/><rect x="2422" y="284" width="1.8" height="8"/><rect x="2427" y="284" width="1.8" height="8"/><rect x="2432" y="284" width="1.8" height="8"/></g><g fill="#333"><rect x="2402" y="469.5" width="1.8" height="8"/><rect x="2407" y="469.5" width="1.8" height="8"/><rect x="2412" y="469.5" width="1.8" height="8"/><rect x="2417" y="469.5" width="1.8" height="8"/><rect x="2422" y="469.5" width="1.8" height="8"/><rect x="2427" y="469.5" width="1.8" height="8"/><rect x="2432" y="469.5" width="1.8" height="8"/></g><g fill="#333"><rect x="2402" y="656.5" width="1.8" height="8"/><rect x="2407" y="656.5" width="1.8" height="8"/><rect x="2412" y="656.5" width="1.8" height="8"/><rect x="2417" y="656.5" width="1.8" height="8"/><rect x="2422" y="656.5" width="1.8" height="8"/><rect x="2427" y="656.5" width="1.8" height="8"/><rect x="2432" y="656.5" width="1.8" height="8"/></g><g fill="#333"><rect x="2402" y="788" width="1.8" height="8"/><rect x="2407" y="788" width="1.8" height="8"/><rect x="2412" y="788" width="1.8" height="8"/><rect x="2417" y="788" width="1.8" height="8"/><rect x="2422" y="788" width="1.8" height="8"/><rect x="2427" y="788" width="1.8" height="8"/><rect x="2432" y="788" width="1.8" height="8"/></g><g fill="#333"><rect x="2402" y="919.5" width="1.8" height="8"/><rect x="2407" y="919.5" width="1.8" height="8"/><rect x="2412" y="919.5" width="1.8" height="8"/><rect x="2417" y="919.5" width="1.8" height="8"/><rect x="2422" y="919.5" width="1.8" height="8"/><rect x="2427" y="919.5" width="1.8" height="8"/><rect x="2432" y="919.5" width="1.8" height="8"/></g><g transform="translate(2419 191)"><path d="M-4 -13 C8 -14 17 -8 17 0 C17 9 8 14 -2 14 C-12 14 -18 9 -17 3 C-16 -2 -10 -1 -8 -4 C-6 -7 -9 -12 -4 -13Z" fill="#c8c8c8"/><circle cx="-10" cy="6" r="3" fill="#535353"/><circle cx="-2" cy="9" r="3" fill="#535353"/><circle cx="6" cy="7" r="3" fill="#535353"/><circle cx="11" cy="1" r="2.6" fill="#535353"/><circle cx="9" cy="-6" r="2.4" fill="#535353"/></g><g transform="translate(2419 244)"><defs><linearGradient id="dg1" x1="0" y1="0" x2="1" y2="1"><stop offset="0" stop-color="#222"/><stop offset="1" stop-color="#ddd"/></linearGradient></defs><path d="M-13 -14 A28 28 0 0 1 15 14 L-13 14Z" fill="url(#dg1)" stroke="#c8c8c8" stroke-width="2"/></g><g transform="translate(2419 325)"><rect x="-14" y="-11" width="29" height="22" fill="none" stroke="#c8c8c8" stroke-width="2"/><g fill="#c8c8c8"><rect x="-12" y="-9" width="7" height="8"/><rect x="-3" y="-9" width="7" height="8" fill="#888"/><rect x="6" y="-9" width="7" height="8"/><rect x="-12" y="1" width="7" height="8" fill="#999"/><rect x="-3" y="1" width="7" height="8"/><rect x="6" y="1" width="7" height="8" fill="#aaa"/></g></g><g transform="translate(2419 377)"><rect x="-7" y="2" width="14" height="13" rx="1.5" fill="#c8c8c8"/><path d="M-5 2 L-11 -8 M0 2 L-2 -14 M4 2 L10 -6" stroke="#c8c8c8" stroke-width="2"/><ellipse cx="-11" cy="-6" rx="3" ry="5" fill="#c8c8c8"/><rect x="-4" y="-16" width="4" height="7" fill="#c8c8c8"/><path d="M6 -8 C10 -14 16 -10 14 -5Z" fill="#c8c8c8"/></g><g transform="translate(2419 431)"><circle cx="0" cy="-8" r="7" fill="#c8c8c8"/><circle cx="-8" cy="3" r="7" fill="#c8c8c8"/><circle cx="8" cy="3" r="7" fill="#c8c8c8"/><path d="M-2 2 L-3 13 L-9 15 H9 L3 13 L2 2Z" fill="#c8c8c8"/></g><g transform="translate(2419 508)"><rect x="-14" y="-10" width="28" height="3" fill="#c8c8c8"/><rect x="-14" y="-2" width="28" height="4" fill="#c8c8c8"/><rect x="-14" y="7" width="28" height="5" fill="#c8c8c8"/></g><g transform="translate(2419 563)"><defs><linearGradient id="dg2" x1="0" x2="1"><stop offset="0" stop-color="#222"/><stop offset="1" stop-color="#eee"/></linearGradient></defs><rect x="-14" y="-10" width="28" height="20" fill="url(#dg2)" stroke="#c8c8c8" stroke-width="2"/></g><g transform="translate(2419 620)"><circle cx="-4" cy="-4" r="11" fill="#c8c8c8"/><circle cx="4" cy="4" r="11" fill="#777" stroke="#c8c8c8" stroke-width="2"/></g><g transform="translate(2419 696)"><circle cx="0" cy="0" r="14" fill="none" stroke="#c8c8c8" stroke-width="1.8" stroke-dasharray="3 2"/><circle cx="0" cy="0" r="10.5" fill="#c8c8c8"/></g><g transform="translate(2419 749)"><rect x="-5" y="-13" width="19" height="19" fill="none" stroke="#c8c8c8" stroke-width="2.5"/><rect x="-14" y="1" width="10" height="10" fill="#535353" stroke="#c8c8c8" stroke-width="2"/><rect x="-10" y="5" width="10" height="10" fill="#535353" stroke="#c8c8c8" stroke-width="2"/></g><g transform="translate(2419 827)"><path d="M-2 -13 H-14 V14 H13 V2" fill="none" stroke="#c8c8c8" stroke-width="3"/><path d="M-3 4 L13 -12 M3 -14 H14 V-3" fill="none" stroke="#c8c8c8" stroke-width="3"/></g><g transform="translate(2419 881)"><rect x="-15" y="-15" width="17" height="22" fill="none" stroke="#c8c8c8" stroke-width="2.5"/><rect x="-8" y="-3" width="22" height="18" fill="#535353" stroke="#c8c8c8" stroke-width="2.5"/></g><g transform="translate(2419 959)"><path d="M-15 13 L-6 -13 L-1 -13 L8 13 M-11 4 H4" fill="none" stroke="#c8c8c8" stroke-width="4"/><path d="M13 -15 V15" stroke="#c8c8c8" stroke-width="1.8"/></g><g transform="translate(2419 1015)"><path d="M0 -13 H11 M3 -13 V15 M9 -13 V15" fill="none" stroke="#c8c8c8" stroke-width="3.5"/><path d="M2 -13 C-14 -13 -14 5 2 5Z" fill="#c8c8c8"/></g><g transform="translate(2419 1069)"><path fill="#c8c8c8" fill-rule="evenodd" d="M0 -16 C10 -16 14 -9 13 -1 C11 10 4 16 -3 16 C-11 16 -14 9 -13 1 C-11 -10 -5 -16 0 -16Z M1 -13.5 C-3 -13.5 -6 -6 -7 2 C-8 9 -6 13.5 -3 13.5 C2 13.5 5 6 6 -2 C7 -9 5 -13.5 1 -13.5Z"/></g><g transform="translate(2419 1123)"><rect x="-14" y="1" width="10" height="10" fill="#535353" stroke="#c8c8c8" stroke-width="2"/><rect x="-10" y="5" width="10" height="10" fill="#535353" stroke="#c8c8c8" stroke-width="2"/><path d="M-1 2 L6 -16 L9 -16 L16 2 M2 -5 H13" fill="none" stroke="#c8c8c8" stroke-width="3"/></g><g transform="translate(2419 1176)"><rect x="-14" y="1" width="10" height="10" fill="#535353" stroke="#c8c8c8" stroke-width="2"/><rect x="-10" y="5" width="10" height="10" fill="#535353" stroke="#c8c8c8" stroke-width="2"/><path d="M6 -16 H15 M8.5 -16 V10 M13.5 -16 V10" fill="none" stroke="#c8c8c8" stroke-width="3"/><path d="M8 -16 C-5 -16 -5 -2 8 -2Z" fill="#c8c8c8"/></g></svg>
<!-- LAYERS PANEL CONTENT -->
<div class="a" style="left:2549px;top:146px;width:377px;height:52px;background:#434343"></div>
<div class="a" style="left:2549px;top:146px;width:1px;height:52px;background:#3a3a3a"></div>
<div class="a" style="left:2676px;top:146px;width:1px;height:52px;background:#3a3a3a"></div>
<div class="a" style="left:2789px;top:146px;width:1px;height:52px;background:#3a3a3a"></div>
<div class="t" style="left:2477px;top:163px;font-size:19px;letter-spacing:-0.4px;color:#f0f0f0">Layers</div>
<div class="t" style="left:2568px;top:163px;font-size:19px;letter-spacing:-0.2px;color:#c4c4c4">Properties</div>
<div class="t" style="left:2695px;top:163px;font-size:19px;letter-spacing:-0.2px;color:#c4c4c4">Libraries</div>
<svg style="left:2897px;top:166px" width="20" height="16" viewBox="0 0 20 16"><path d="M0 1.5h20 M0 8h20 M0 14.5h20" stroke="#c8c8c8" stroke-width="2.2"/></svg>
<div class="a" style="left:2470px;top:210px;width:447px;height:65px;background:#505050;border:1px solid #585858;border-radius:3px"></div>
<div class="a" style="left:2481px;top:219px;width:381px;height:44px;background:#454545;border:1px solid #4e4e4e;border-radius:4px"></div>
<svg style="left:2491px;top:228px" width="26" height="26" viewBox="0 0 26 26"><circle cx="10" cy="10" r="7.5" fill="none" stroke="#c8c8c8" stroke-width="2.6"/><path d="M15.5 15.5 L23 23" stroke="#c8c8c8" stroke-width="3.5" stroke-linecap="round"/></svg>
<div class="t" style="left:2536px;top:230px;font-size:22px;color:#5f5f5f">Search All</div>
<svg style="left:2880px;top:227px" width="28" height="29" viewBox="0 0 28 29"><path d="M0 0 H28 L17 13 V28 L11 24 V13Z" fill="#c8c8c8"/></svg>
<!-- rows -->
<div class="a" style="left:2470px;top:281px;width:447px;height:39px;background:#4c6280"></div>
<div class="a" style="left:2470px;top:320px;width:447px;height:40px;background:#535353;border-bottom:1px solid #5c5c5c"></div>
<div class="a" style="left:2509px;top:281px;width:1px;height:79px;background:#474747"></div>
<div class="a" style="left:2549px;top:281px;width:1px;height:79px;background:#474747"></div>
<div class="a" style="left:2561px;top:281px;width:1px;height:79px;background:#474747"></div>
<div class="a" style="left:2848px;top:281px;width:1px;height:79px;background:#474747"></div>
<svg style="left:2903px;top:280px" width="14" height="14" viewBox="0 0 14 14"><path d="M0 0 H13 V13Z" fill="#c8c8c8"/></svg>
<svg style="left:2574px;top:296px" width="17" height="11" viewBox="0 0 17 11"><path d="M2 2 L8.5 8.5 L15 2" fill="none" stroke="#e0e0e0" stroke-width="2.4"/></svg>
<svg style="left:2609px;top:283px" width="34" height="34" viewBox="0 0 34 34"><rect x="0" y="0" width="34" height="34" fill="#111"/><rect x="2" y="2" width="30" height="30" fill="#fff"/><circle cx="17" cy="17" r="14" fill="#d9aa4b"/><path d="M9 18 H25 A9 9 0 0 1 9 18Z" fill="#fff"/><path d="M13 9 c-2 2 0 4 1 6 M17 9 c-2 2 0 4 1 6 M21 9 c-2 2 0 4 1 6" stroke="#fff" stroke-width="1.4" fill="none"/></svg>
<div class="t" style="left:2653px;top:291px;font-size:19px;color:#d4d4d4">Isolation Mode</div>
<div class="a" style="left:2888px;top:291px;width:17px;height:17px;background:#4f7ff0;border:2px solid #1a1a1a"></div>
<svg style="left:2477px;top:330px" width="26" height="20" viewBox="0 0 26 20"><path d="M1 10 C6 1 20 1 25 10 C20 19 6 19 1 10Z" fill="#c8c8c8"/><circle cx="13" cy="10" r="5" fill="#535353"/><circle cx="12" cy="9.5" r="2.6" fill="#c8c8c8"/></svg>
<div class="a" style="left:2552px;top:323px;width:7px;height:34px;background:#4f7ff0"></div>
<svg style="left:2653px;top:323px" width="34" height="34" viewBox="0 0 34 34"><rect x="0" y="0" width="34" height="34" fill="#111"/><rect x="2" y="2" width="30" height="30" fill="#fff"/><circle cx="17" cy="17" r="14" fill="#d9aa4b"/><path d="M9 18 H25 A9 9 0 0 1 9 18Z" fill="#fff"/><path d="M13 9 c-2 2 0 4 1 6 M17 9 c-2 2 0 4 1 6 M21 9 c-2 2 0 4 1 6" stroke="#fff" stroke-width="1.4" fill="none"/></svg>
<div class="t" style="left:2698px;top:331px;font-size:19px;color:#e6e6e6">&lt;Image&gt;</div>
<svg style="left:2856px;top:329px" width="26" height="26" viewBox="0 0 26 26"><circle cx="13" cy="13" r="11" fill="none" stroke="#bdbdbd" stroke-width="2"/><circle cx="13" cy="13" r="6.5" fill="none" stroke="#bdbdbd" stroke-width="2"/></svg>
<div class="a" style="left:2888px;top:332px;width:17px;height:17px;background:#4f7ff0;border:2px solid #1a1a1a"></div>
<div class="a" style="left:2470px;top:360px;width:447px;height:1160px;border:1px solid #5a5a5a;border-top:none;border-radius:0 0 4px 4px"></div>

<!-- ARTBOARD -->
<div class="a" style="left:304px;top:368px;width:1236px;height:930px;background:#ffffff"></div>


<!-- ARTWORK -->
<svg class="a" style="left:0;top:0" width="2926" height="1530" viewBox="0 0 2926 1530">
  <circle cx="923.3" cy="832.5" r="304.5" fill="#d9aa4b" stroke="#8d7d5c" stroke-width="1"/>
  <path d="M706.3 850.3 L1139 850.3 A222 222 0 0 1 992 1012 L992 1031.6 L853.3 1031.6 L853.3 1012 A222 222 0 0 1 706.3 850.3 Z" fill="#fff"/>
  <g id="st"><path d="M858 671 C831 671 806.5 692 806.5 722 C806.5 746 820 761 837 772 C851 782 857.5 798 857 815 C856.8 824 855 832 852 845" fill="none" stroke="#fff" stroke-width="30"/><circle cx="858" cy="671" r="15" fill="#fff"/></g>
  <use href="#st" transform="translate(85 0)"/>
  <use href="#st" transform="translate(171 0)"/>
  <rect x="780" y="834.5" width="300" height="15.8" fill="#d9aa4b"/>
  <!-- selection -->
  <rect x="572" y="485.5" width="696" height="696.5" fill="none" stroke="#7b9cf7" stroke-width="4"/>
<rect x="563" y="477" width="14" height="14" fill="#d9d9d9" stroke="#7b9cf7" stroke-width="2"/><rect x="913" y="478" width="14" height="14" fill="#d9d9d9" stroke="#7b9cf7" stroke-width="2"/><rect x="1263" y="478.5" width="14" height="14" fill="#d9d9d9" stroke="#7b9cf7" stroke-width="2"/><rect x="564" y="826.5" width="14" height="14" fill="#d9d9d9" stroke="#7b9cf7" stroke-width="2"/><rect x="1263" y="826.5" width="14" height="14" fill="#d9d9d9" stroke="#7b9cf7" stroke-width="2"/><rect x="563" y="1172.5" width="14" height="14" fill="#d9d9d9" stroke="#7b9cf7" stroke-width="2"/><rect x="916" y="1172.5" width="14" height="14" fill="#d9d9d9" stroke="#7b9cf7" stroke-width="2"/><rect x="1263" y="1173" width="14" height="14" fill="#d9d9d9" stroke="#7b9cf7" stroke-width="2"/>
</svg>

<!-- IMAGE TRACE PANEL -->
<div class="a" style="left:1654px;top:266px;width:497px;height:658px;background:rgba(0,0,0,0.18);filter:blur(3px)"></div>
<div class="a" style="left:1658px;top:269px;width:489px;height:650px;background:#535353;border:1px solid #3a3a3a"></div>
<div class="a" style="left:1658px;top:269px;width:489px;height:26px;background:#434343;border-bottom:1px solid #363636"></div>
<div class="a" style="left:1803px;top:295px;width:344px;height:52px;background:#434343"></div>
<svg style="left:2091px;top:278px" width="12" height="8" viewBox="0 0 12 8"><path d="M5 0.5 L1 4 L5 7.5z M11 0.5 L7 4 L11 7.5z" fill="#cfcfcf"/></svg>
<svg style="left:2125px;top:276px" width="13" height="13" viewBox="0 0 13 13"><path d="M1.5 1.5 L11.5 11.5 M11.5 1.5 L1.5 11.5" stroke="#d6d6d6" stroke-width="2.6"/></svg>
<div class="t" style="left:1678px;top:311px;font-size:19px;font-weight:bold;letter-spacing:-0.3px;color:#f0f0f0">Image Trace</div>

<!-- preset icons -->
<svg style="left:1745px;top:368px" width="320" height="36" viewBox="1745 368 320 36">
  <path d="M1765 373.5 A13 13 0 0 1 1765 399.5" fill="none" stroke="#c8c8c8" stroke-width="2.2"/>
  <circle cx="1765.5" cy="373.5" r="2.2" fill="#c8c8c8"/><circle cx="1778" cy="385" r="2.2" fill="#c8c8c8"/><circle cx="1765.5" cy="398.5" r="2.2" fill="#c8c8c8"/>
  <path d="M1764 377 A9 9 0 1 1 1767 395 A7 7 0 0 0 1759 385 A8 8 0 0 0 1764 377Z" fill="#c8c8c8"/>
  <circle cx="1757" cy="393" r="5" fill="#c8c8c8"/><circle cx="1757" cy="393" r="2.2" fill="#535353"/>
  <path d="M1757 385 v3 M1757 398 v3 M1749 393 h3 M1762 393 h3 M1751.5 387.5 l2 2 M1760.5 396.5 l2 2 M1751.5 398.5 l2 -2 M1760.5 389.5 l2 -2" stroke="#c8c8c8" stroke-width="1.6"/>
  <path d="M1805 377.5 h7 l3 -4.5 h8 l3 4.5 h7.5 v17 h-28.5z" fill="#c8c8c8"/>
  <circle cx="1819" cy="385" r="5" fill="none" stroke="#535353" stroke-width="1.8"/>
  <rect x="1861.5" y="372.5" width="26" height="25.5" fill="none" stroke="#c8c8c8" stroke-width="2"/>
  <rect x="1863" y="374" width="6" height="6" fill="#4a4a4a"/>
  <rect x="1870" y="374" width="9" height="8" fill="#7a7a7a"/>
  <path d="M1869 374 v8 h10 M1863 382 h6 v8 h-6 M1879 374 v8" fill="none" stroke="#c8c8c8" stroke-width="1.5"/>
  <rect x="1863" y="383" width="6" height="7" fill="#888"/>
  <defs><linearGradient id="gr1" x1="0" x2="1"><stop offset="0" stop-color="#111"/><stop offset="1" stop-color="#eee"/></linearGradient></defs>
  <rect x="1916.5" y="372.5" width="26" height="25.5" fill="url(#gr1)" stroke="#c8c8c8" stroke-width="2"/>
  <rect x="1973" y="372.5" width="26" height="25.5" fill="none" stroke="#c8c8c8" stroke-width="2"/>
  <rect x="1973" y="372.5" width="13" height="25.5" fill="#c8c8c8"/>
  <path d="M2028 372.5 H2046.5 V380 A10 10 0 1 1 2035.5 393 V389.5 H2028 Z" fill="none" stroke="#c8c8c8" stroke-width="2"/>
</svg>
<div class="a" style="left:1669px;top:418px;width:467px;height:1px;background:#474747"></div>

<!-- rows -->
<div class="t" style="left:1702px;top:446px;font-size:19px;color:#cfcfcf">Preset:</div>
<div class="a" style="left:1767px;top:434px;width:312px;height:38px;background:#464646;border:1px solid #5a5a5a;border-radius:4px"></div>
<div class="t" style="left:1779px;top:445px;font-size:19px;color:#f2f2f2">[Default]</div>
<svg style="left:2054px;top:448px" width="16" height="11" viewBox="0 0 16 11"><path d="M1.5 1.5 L8 8.5 L14.5 1.5" fill="none" stroke="#e6e6e6" stroke-width="2.4"/></svg>
<svg style="left:2102px;top:446px" width="25" height="16" viewBox="0 0 25 16"><path d="M0 2h3 M6 2h18 M0 8h3 M6 8h18 M0 14h3 M6 14h18" stroke="#c8c8c8" stroke-width="2.2"/></svg>

<div class="t" style="left:1713px;top:500px;font-size:19px;color:#cfcfcf">View:</div>
<div class="a" style="left:1767px;top:489px;width:312px;height:38px;background:#464646;border:1px solid #5a5a5a;border-radius:4px"></div>
<div class="t" style="left:1779px;top:500px;font-size:19px;color:#f2f2f2">Tracing Result</div>
<svg style="left:2054px;top:503px" width="16" height="11" viewBox="0 0 16 11"><path d="M1.5 1.5 L8 8.5 L14.5 1.5" fill="none" stroke="#e6e6e6" stroke-width="2.4"/></svg>
<svg style="left:2099px;top:501px" width="28" height="19" viewBox="0 0 28 19"><path d="M1 9.5 C6 1 22 1 27 9.5 C22 18 6 18 1 9.5Z" fill="#c8c8c8"/><circle cx="14" cy="9.5" r="5.2" fill="#535353"/><circle cx="14" cy="9.5" r="3" fill="#c8c8c8"/></svg>

<div class="t" style="left:1708px;top:553px;font-size:19px;color:#cfcfcf">Mode:</div>
<div class="a" style="left:1767px;top:543px;width:312px;height:38px;background:#464646;border:1px solid #5a5a5a;border-radius:4px"></div>
<div class="t" style="left:1779px;top:553px;font-size:19px;color:#f2f2f2">Black and White</div>
<svg style="left:2054px;top:557px" width="16" height="11" viewBox="0 0 16 11"><path d="M1.5 1.5 L8 8.5 L14.5 1.5" fill="none" stroke="#e6e6e6" stroke-width="2.4"/></svg>

<div class="t" style="left:1697px;top:603px;font-size:19px;color:#777">Palette:</div>
<div class="a" style="left:1766px;top:593px;width:314px;height:38px;background:#585858;border-radius:3px"></div>
<div class="t" style="left:1780px;top:603px;font-size:19px;color:#7c7c7c">Limited</div>
<svg style="left:2054px;top:607px" width="16" height="11" viewBox="0 0 16 11"><path d="M1.5 1.5 L8 8.5 L14.5 1.5" fill="none" stroke="#707070" stroke-width="2.2"/></svg>

<div class="t" style="left:1670px;top:653px;font-size:19px;color:#d8d8d8">Threshold:</div>
<div class="a" style="left:1769px;top:659px;width:282px;height:3px;background:#7a7a7a"></div>
<svg style="left:1896px;top:648px" width="27" height="27" viewBox="0 0 27 27"><circle cx="13.5" cy="13.5" r="10" fill="#535353" stroke="#cdcdcd" stroke-width="3.6"/></svg>
<div class="a" style="left:2065px;top:643px;width:69px;height:36px;background:#434343;border:1px solid #4a4a4a;border-radius:3px"></div>
<div class="t" style="left:2073px;top:651px;font-size:19px;color:#f2f2f2">128</div>
<div class="t" style="left:1767px;top:684px;font-size:19px;color:#d0d0d0">Less</div>
<div class="t" style="left:2012px;top:684px;font-size:19px;color:#d0d0d0">More</div>

<svg style="left:1685px;top:725px" width="12" height="23" viewBox="0 0 12 23"><path d="M0 0 L11.5 11.5 L0 23Z" fill="#c8c8c8"/></svg>
<div class="t" style="left:1710px;top:723px;font-size:19px;color:#d0d0d0">Advanced</div>
<div class="a" style="left:1797px;top:734px;width:339px;height:1px;background:#4a4a4a"></div>
<div class="a" style="left:1668px;top:766px;width:468px;height:1px;background:#474747"></div>

<svg style="left:1670px;top:798px" width="30" height="30" viewBox="0 0 30 30"><circle cx="15" cy="15" r="12.5" fill="none" stroke="#c8c8c8" stroke-width="2.2"/><rect x="13.2" y="12" width="3.6" height="10" fill="#c8c8c8"/><circle cx="15" cy="8.5" r="2" fill="#c8c8c8"/><rect x="11" y="20.5" width="8" height="2" fill="#c8c8c8"/></svg>
<div class="t" style="left:1718px;top:783px;font-size:19px;color:#d0d0d0">Paths:</div>
<div class="t" style="left:1802px;top:783px;font-size:19px;color:#d0d0d0">0</div>
<div class="t" style="left:1938px;top:783px;font-size:19px;color:#d0d0d0">Colors:</div>
<div class="t" style="left:2007px;top:783px;font-size:19px;color:#d0d0d0">0</div>
<div class="t" style="left:1718px;top:823px;font-size:19px;color:#d0d0d0">Anchors:</div>
<div class="t" style="left:1802px;top:823px;font-size:19px;color:#d0d0d0">0</div>
<div class="a" style="left:1668px;top:860px;width:468px;height:1px;background:#474747"></div>

<div class="a" style="left:1670px;top:881px;width:23px;height:23px;border:2px solid #bdbdbd;border-radius:2px"></div>
<div class="t" style="left:1703px;top:884px;font-size:19px;color:#f0f0f0">Preview</div>
<div class="a" style="left:2013px;top:872px;width:122px;height:36px;border:2px solid #6c6c6c;border-radius:3px"></div>
<div class="t" style="left:2053px;top:884px;font-size:19px;color:#f0f0f0">Trace</div>

<!-- red highlight rect -->
<div class="a" style="left:1640px;top:256px;width:528px;height:673px;border:4.5px solid #ee2b2b"></div>

<div class="a" style="left:0;top:1528px;width:2378px;height:2px;background:#4a4a4a"></div>
<!-- RED ELLIPSE -->
<svg style="left:0;top:0" width="2926" height="300" viewBox="0 0 2926 300">
 <ellipse cx="951" cy="92.8" rx="124.5" ry="51" fill="none" stroke="#ee2a2a" stroke-width="4.2"/>
</svg>
<!-- CURSOR -->
<svg style="left:1030px;top:120px" width="200" height="200" viewBox="1030 120 200 200">
 <defs><filter id="sh" x="-80%" y="-80%" width="260%" height="260%"><feGaussianBlur stdDeviation="10"/></filter></defs>
 <path d="M1090 165 L1090 270 L1124 236 L1170 234 Z" fill="#000" opacity="0.5" filter="url(#sh)"/>
 <path d="M1085 153 L1085 249 L1115 219 Q1118 216 1122 216 L1160.5 215 Z" fill="#fff" stroke="#fff" stroke-width="13" stroke-linejoin="round"/>
 <path d="M1085 153 L1085 249 L1115 219 Q1118 216 1122 216 L1160.5 215 Z" fill="#000"/>
</svg>
</body></html>
